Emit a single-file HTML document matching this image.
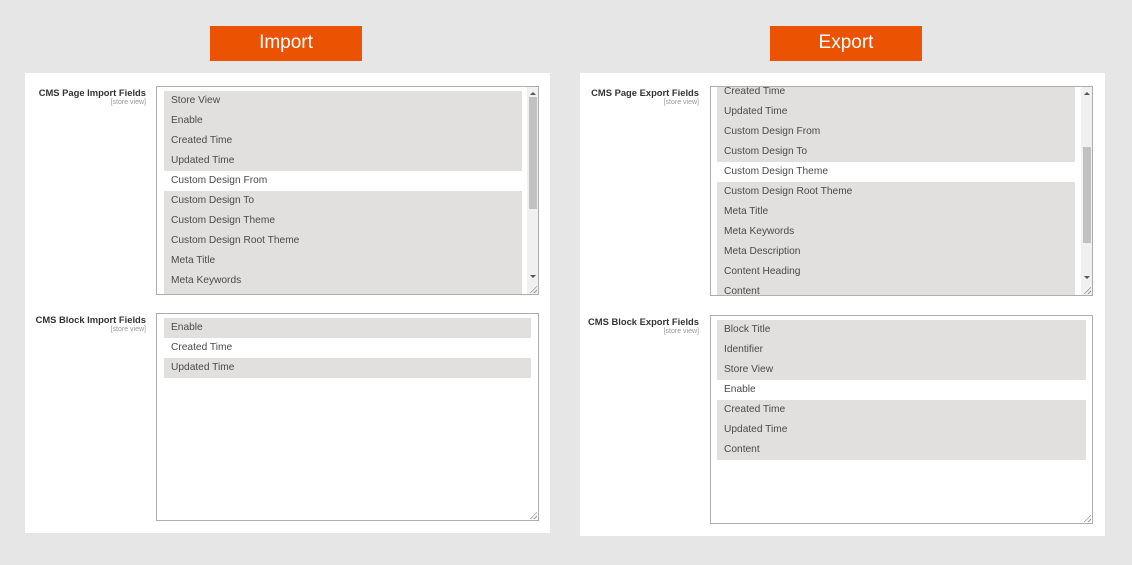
<!DOCTYPE html>
<html><head><meta charset="utf-8"><style>
*{margin:0;padding:0;box-sizing:border-box}
body{width:1132px;height:565px;background:#e6e6e6;position:relative;overflow:hidden;font-family:"Liberation Sans",sans-serif}
.btn{position:absolute;top:26px;width:152px;height:35px;background:#eb5202;color:#fff;font-size:19px;text-align:center;line-height:34px}
.panel{position:absolute;background:#fff}
.lbl{position:absolute;text-align:right;width:140px;font-size:9.4px;font-weight:bold;color:#333}
.lbl span{display:block;font-weight:normal;font-size:7px;color:#999;margin-top:1px}
.sel{position:absolute;border:1px solid #adadad;background:#fff;overflow:hidden}
.it{position:absolute;height:20px;line-height:20px;font-size:10.2px;color:#4a4a4a;padding-left:7px}
.g{background:#e2e0de}
.sb{position:absolute;top:0;bottom:0;width:12px;background:#f0f0f0}
.th{position:absolute;left:2px;width:8px;background:#c1c1c1}
.up,.dn{position:absolute;left:3px;width:0;height:0;border-left:3px solid transparent;border-right:3px solid transparent}
.up{border-bottom:3px solid #555;top:5px}
.dn{border-top:3px solid #555;bottom:16px}
.rz{position:absolute;right:1px;bottom:1px;width:8px;height:8px;background:linear-gradient(135deg,transparent 55%,#999 55%,#999 62%,transparent 62%,transparent 78%,#999 78%,#999 85%,transparent 85%)}
</style></head><body>
<div class="btn" style="left:210px">Import</div>
<div class="btn" style="left:770px">Export</div>

<div class="panel" style="left:25px;top:73px;width:525px;height:460px"></div>
<div class="panel" style="left:580px;top:73px;width:525px;height:463px"></div>

<div class="lbl" style="left:6px;top:87px">CMS Page Import Fields<span>[store view]</span></div>
<div class="lbl" style="left:6px;top:314px">CMS Block Import Fields<span>[store view]</span></div>
<div class="lbl" style="left:559px;top:87px">CMS Page Export Fields<span>[store view]</span></div>
<div class="lbl" style="left:559px;top:316px">CMS Block Export Fields<span>[store view]</span></div>

<div class="sel" style="left:156px;top:86px;width:383px;height:209px">
 <div class="it g" style="left:7px;top:4px;width:358px">Store View</div>
 <div class="it g" style="left:7px;top:24px;width:358px">Enable</div>
 <div class="it g" style="left:7px;top:44px;width:358px">Created Time</div>
 <div class="it g" style="left:7px;top:64px;width:358px">Updated Time</div>
 <div class="it" style="left:7px;top:84px;width:358px">Custom Design From</div>
 <div class="it g" style="left:7px;top:104px;width:358px">Custom Design To</div>
 <div class="it g" style="left:7px;top:124px;width:358px">Custom Design Theme</div>
 <div class="it g" style="left:7px;top:144px;width:358px">Custom Design Root Theme</div>
 <div class="it g" style="left:7px;top:164px;width:358px">Meta Title</div>
 <div class="it g" style="left:7px;top:184px;width:358px">Meta Keywords</div>
 <div class="it g" style="left:7px;top:204px;width:358px"></div>
 <div class="sb" style="left:370px"><div class="up"></div><div class="th" style="top:10px;height:112px"></div><div class="dn"></div></div>
 <div class="rz"></div>
</div>
<div class="sel" style="left:156px;top:313px;width:383px;height:208px">
 <div class="it g" style="left:7px;top:4px;width:367px">Enable</div>
 <div class="it" style="left:7px;top:24px;width:367px">Created Time</div>
 <div class="it g" style="left:7px;top:44px;width:367px">Updated Time</div>
 <div class="rz"></div>
</div>
<div class="sel" style="left:710px;top:86px;width:383px;height:210px">
 <div class="it g" style="left:6px;top:-5px;width:358px">Created Time</div>
 <div class="it g" style="left:6px;top:15px;width:358px">Updated Time</div>
 <div class="it g" style="left:6px;top:35px;width:358px">Custom Design From</div>
 <div class="it g" style="left:6px;top:55px;width:358px">Custom Design To</div>
 <div class="it" style="left:6px;top:75px;width:358px">Custom Design Theme</div>
 <div class="it g" style="left:6px;top:95px;width:358px">Custom Design Root Theme</div>
 <div class="it g" style="left:6px;top:115px;width:358px">Meta Title</div>
 <div class="it g" style="left:6px;top:135px;width:358px">Meta Keywords</div>
 <div class="it g" style="left:6px;top:155px;width:358px">Meta Description</div>
 <div class="it g" style="left:6px;top:175px;width:358px">Content Heading</div>
 <div class="it g" style="left:6px;top:195px;width:358px">Content</div>
 <div class="sb" style="left:370px"><div class="up"></div><div class="th" style="top:60px;height:96px"></div><div class="dn"></div></div>
 <div class="rz"></div>
</div>
<div class="sel" style="left:710px;top:315px;width:383px;height:209px">
 <div class="it g" style="left:6px;top:4px;width:369px">Block Title</div>
 <div class="it g" style="left:6px;top:24px;width:369px">Identifier</div>
 <div class="it g" style="left:6px;top:44px;width:369px">Store View</div>
 <div class="it" style="left:6px;top:64px;width:369px">Enable</div>
 <div class="it g" style="left:6px;top:84px;width:369px">Created Time</div>
 <div class="it g" style="left:6px;top:104px;width:369px">Updated Time</div>
 <div class="it g" style="left:6px;top:124px;width:369px">Content</div>
 <div class="rz"></div>
</div>
</body></html>
